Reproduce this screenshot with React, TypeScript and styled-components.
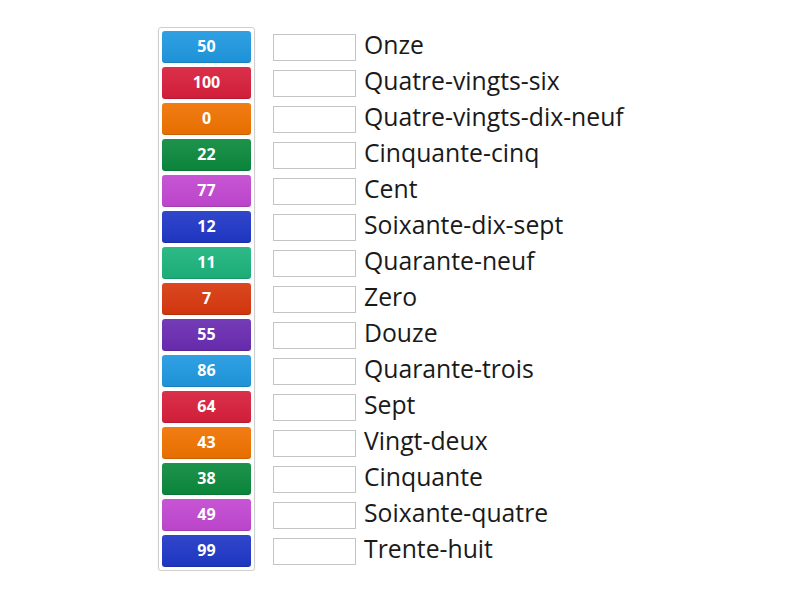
import React from "react";
import styled, { createGlobalStyle } from "styled-components";

const Global = createGlobalStyle`
  html, body { margin: 0; padding: 0; background: #ffffff; }
  body { font-family: "Open Sans", "Noto Sans", sans-serif; }
`;

const Page = styled.div`
  display: flex;
  align-items: flex-start;
  padding: 27px 0 0 158px;
`;

const Panel = styled.div`
  display: flex;
  flex-direction: column;
  gap: 4px;
  padding: 3px;
  border: 1px solid #cfcfcf;
  border-radius: 3px;
  box-shadow: 0 1px 2px rgba(0, 0, 0, 0.08);
`;

const Tile = styled.div<{ $bg: string }>`
  width: 89px;
  height: 32px;
  border-radius: 3px;
  background: linear-gradient(180deg, rgba(255,255,255,0.08) 0%, rgba(0,0,0,0.04) 100%), ${(p) => p.$bg};
  box-shadow: inset 0 -1px 0 rgba(0, 0, 0, 0.12);
  color: #ffffff;
  font-family: "Open Sans", sans-serif;
  font-weight: 700;
  font-size: 16px;
  display: flex;
  align-items: center;
  justify-content: center;
  padding-bottom: 2px;
  box-sizing: border-box;
`;

const List = styled.div`
  display: flex;
  flex-direction: column;
  gap: 4px;
  margin-left: 18px;
  padding-top: 4px;
`;

const Row = styled.div`
  display: flex;
  align-items: center;
  height: 32px;
  gap: 8px;
`;

const Box = styled.div`
  width: 81px;
  height: 25px;
  border: 1px solid #c4c4c4;
  background: #fff;
`;

const Label = styled.span`
  font-family: "Open Sans", sans-serif;
  font-size: 24.75px;
  color: #1a1a1a;
  white-space: nowrap;
  line-height: 1;
  padding-bottom: 4px;
`;

const tiles: [string, string][] = [
  ["50", "#1f98e0"],
  ["100", "#d81f3b"],
  ["0", "#f07200"],
  ["22", "#0b893d"],
  ["77", "#c247d1"],
  ["12", "#1f37c7"],
  ["11", "#1cb37b"],
  ["7", "#d8380e"],
  ["55", "#6a2cb1"],
  ["86", "#1f98e0"],
  ["64", "#d81f3b"],
  ["43", "#f07200"],
  ["38", "#0b893d"],
  ["49", "#c247d1"],
  ["99", "#1f37c7"],
];

const labels = [
  "Onze",
  "Quatre-vingts-six",
  "Quatre-vingts-dix-neuf",
  "Cinquante-cinq",
  "Cent",
  "Soixante-dix-sept",
  "Quarante-neuf",
  "Zero",
  "Douze",
  "Quarante-trois",
  "Sept",
  "Vingt-deux",
  "Cinquante",
  "Soixante-quatre",
  "Trente-huit",
];

export default function App() {
  return (
    <>
      <Global />
      <Page>
        <Panel>
          {tiles.map(([n, c]) => (
            <Tile key={n} $bg={c}>
              {n}
            </Tile>
          ))}
        </Panel>
        <List>
          {labels.map((l) => (
            <Row key={l}>
              <Box />
              <Label>{l}</Label>
            </Row>
          ))}
        </List>
      </Page>
    </>
  );
}
